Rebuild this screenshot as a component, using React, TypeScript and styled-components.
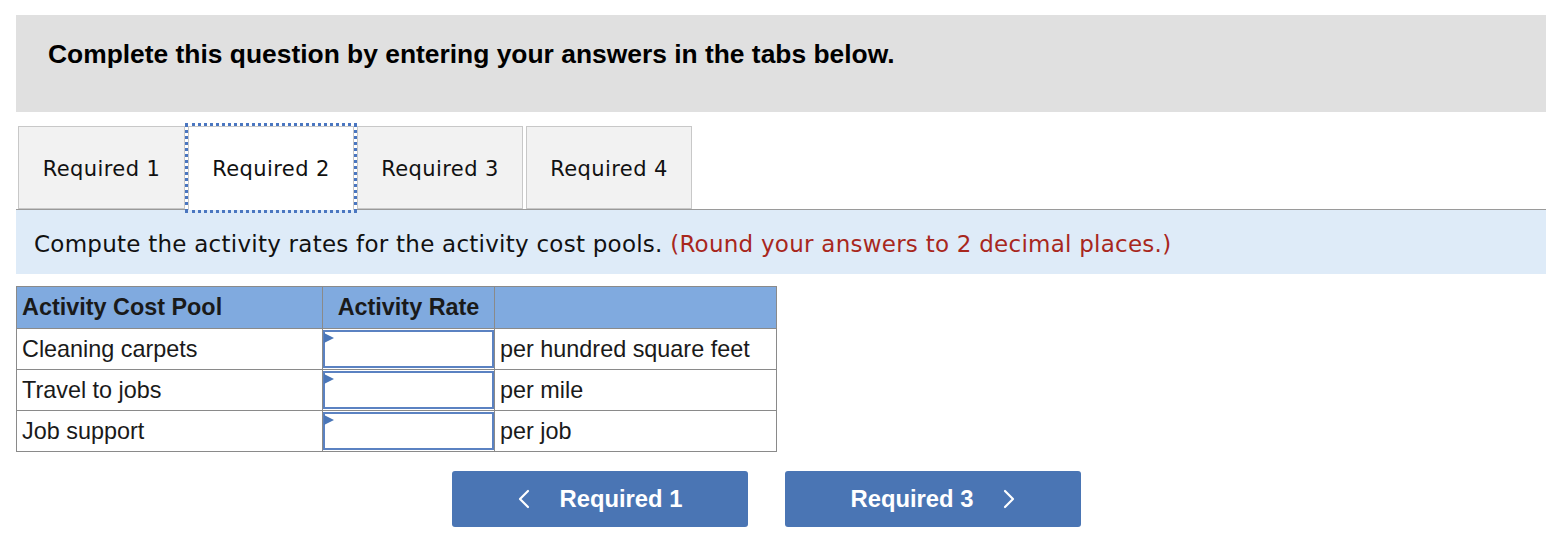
import React from "react";
import styled, { createGlobalStyle } from "styled-components";

const Global = createGlobalStyle`
  html, body { margin: 0; padding: 0; background: #fff; }
  body { font-family: "Liberation Sans", Arial, sans-serif; color: #000; }
`;

const Page = styled.div`
  padding: 15px 20px 0 16px;
`;

const Banner = styled.div`
  height: 97px;
  box-sizing: border-box;
  background: #e0e0e0;
  padding: 25px 32px 0;
  font-family: "Liberation Sans", Arial, sans-serif;
  font-weight: bold;
  font-size: 26.4px;
  line-height: 28px;
`;

const TabRow = styled.div`
  margin-top: 14px;
  display: flex;
  align-items: flex-start;
  padding-left: 2px;
  gap: 3px;
  height: 83px;
  border-bottom: 1px solid #9a9a9a;
`;

const Tab = styled.div<{ $active?: boolean }>`
  width: 166px;
  height: ${(p) => (p.$active ? "84px" : "83px")};
  box-sizing: border-box;
  display: flex;
  align-items: center;
  justify-content: center;
  font-family: "DejaVu Sans", Verdana, sans-serif;
  font-size: 21px;
  letter-spacing: 0.4px;
  color: #111;
  background: ${(p) => (p.$active ? "#fff" : "#f2f2f2")};
  border: 1px solid #c8c8c8;
  border-bottom: ${(p) => (p.$active ? "none" : "1px solid #c8c8c8")};
  outline: ${(p) => (p.$active ? "3px dotted #4a76c0" : "none")};
  position: relative;
  z-index: ${(p) => (p.$active ? 1 : 0)};
  padding-top: ${(p) => (p.$active ? "0" : "2px")};
  &:first-child {
    width: 167px;
  }
`;

const Instruction = styled.div`
  height: 64px;
  box-sizing: border-box;
  background: #deebf8;
  display: flex;
  align-items: center;
  padding-left: 18px;
  padding-top: 4px;
  font-family: "DejaVu Sans", Verdana, sans-serif;
  font-size: 23px;
  letter-spacing: 0.25px;
  color: #111;
`;

const Note = styled.span`
  color: #a8271d;
`;

const Table = styled.table`
  margin-top: 12px;
  border-collapse: collapse;
  font-family: "Liberation Sans", Arial, sans-serif;
  font-size: 23.4px;
  color: #1a1a1a;
`;

const Th = styled.th<{ $w: number; $center?: boolean }>`
  width: ${(p) => p.$w}px;
  height: 42px;
  box-sizing: border-box;
  background: #80aadf;
  border: 1px solid #8a8a8a;
  text-align: ${(p) => (p.$center ? "center" : "left")};
  padding: 0 5px;
  font-weight: bold;
`;

const Td = styled.td`
  height: 40px;
  box-sizing: border-box;
  border: 1px solid #8a8a8a;
  padding: 0 5px;
  text-align: left;
`;

const InputTd = styled.td`
  height: 40px;
  box-sizing: border-box;
  border: 1px solid #8a8a8a;
  padding: 1px 0;
`;

const InputBox = styled.div`
  position: relative;
  height: 38px;
  box-sizing: border-box;
  border: 2px solid #5b82c2;
  background: #fff;
`;

const Marker = styled.span`
  position: absolute;
  left: -1px;
  top: 1px;
  width: 0;
  height: 0;
  border-top: 5.5px solid transparent;
  border-bottom: 5.5px solid transparent;
  border-left: 10px solid #4a76b8;
`;

const NavRow = styled.div`
  margin-top: 19px;
  display: flex;
  gap: 37px;
  padding-left: 436px;
`;

const NavButton = styled.button`
  width: 296px;
  height: 56px;
  border: none;
  border-radius: 3px;
  background: #4a75b4;
  color: #fff;
  font-family: "Liberation Sans", Arial, sans-serif;
  font-weight: bold;
  font-size: 23.8px;
  display: flex;
  align-items: center;
  justify-content: center;
  gap: 30px;
  padding: 0;
  cursor: pointer;
`;

const Chevron = ({ dir }: { dir: "left" | "right" }) => (
  <svg width="12" height="20" viewBox="0 0 12 20" fill="none">
    <path
      d={dir === "left" ? "M10 2 L2 10 L10 18" : "M2 2 L10 10 L2 18"}
      stroke="#fff"
      strokeWidth="2.2"
      strokeLinecap="round"
      strokeLinejoin="round"
    />
  </svg>
);

const rows = [
  { pool: "Cleaning carpets", unit: "per hundred square feet" },
  { pool: "Travel to jobs", unit: "per mile" },
  { pool: "Job support", unit: "per job" },
];

export default function App() {
  return (
    <>
      <Global />
      <Page>
        <Banner>Complete this question by entering your answers in the tabs below.</Banner>
        <TabRow>
          <Tab>Required 1</Tab>
          <Tab $active>Required 2</Tab>
          <Tab>Required 3</Tab>
          <Tab>Required 4</Tab>
        </TabRow>
        <Instruction>
          <span>
            Compute the activity rates for the activity cost pools.{" "}
            <Note>(Round your answers to 2 decimal places.)</Note>
          </span>
        </Instruction>
        <Table>
          <thead>
            <tr>
              <Th $w={306}>Activity Cost Pool</Th>
              <Th $w={172} $center>
                Activity Rate
              </Th>
              <Th $w={282}></Th>
            </tr>
          </thead>
          <tbody>
            {rows.map((r) => (
              <tr key={r.pool}>
                <Td>{r.pool}</Td>
                <InputTd>
                  <InputBox>
                    <Marker />
                  </InputBox>
                </InputTd>
                <Td>{r.unit}</Td>
              </tr>
            ))}
          </tbody>
        </Table>
        <NavRow>
          <NavButton>
            <Chevron dir="left" />
            <span>Required 1</span>
          </NavButton>
          <NavButton>
            <span>Required 3</span>
            <Chevron dir="right" />
          </NavButton>
        </NavRow>
      </Page>
    </>
  );
}
